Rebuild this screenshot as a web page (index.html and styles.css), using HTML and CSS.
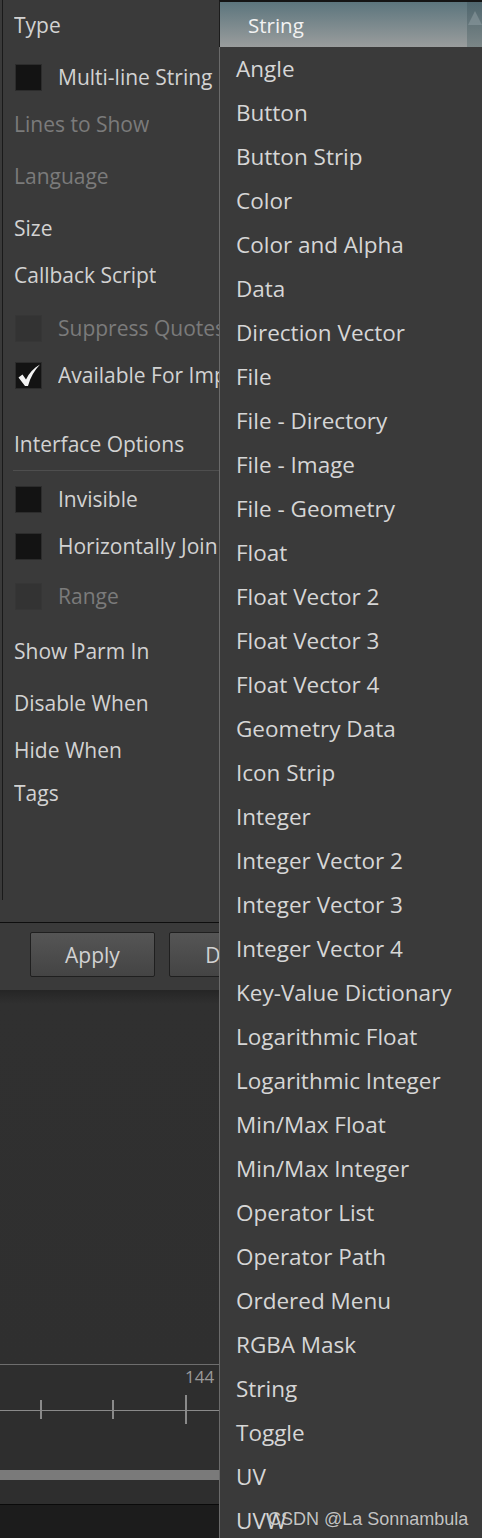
FILE: index.html
```html
<!DOCTYPE html>
<html lang="en">
<head>
    <meta charset="UTF-8">
    <meta name="viewport" content="width=device-width, initial-scale=1.0">
    <title>Edit Parameter Interface</title>
    <link rel="stylesheet" href="styles.css">
</head>
<body>

<div class="window">
    <div class="main">
        <!-- Parameter description panel -->
        <div class="parm-panel">
            <div class="row h52"><span class="label">Type</span></div>
            <div class="row h47"><span class="check"></span><span class="label">Multi-line String</span></div>
            <div class="row h52"><span class="label off">Lines to Show</span></div>
            <div class="row h52"><span class="label off">Language</span></div>
            <div class="row h47"><span class="label">Size</span></div>
            <div class="row h53"><span class="label">Callback Script</span></div>
            <div class="row h47"><span class="check off"></span><span class="label off">Suppress Quotes</span></div>
            <div class="row h69">
                <span class="check">
                    <svg width="24" height="24" viewBox="0 0 24 24"><path d="M1.5 13.5 L5.5 10.5 L9 15.5 C12 9 16.5 4 23 0.5 C17.5 6 13.5 13 11 22 L8 22 Z" fill="#f4f4f4"/></svg>
                </span>
                <span class="label">Available For Import</span>
            </div>
            <div class="row h46"><span class="label">Interface Options</span></div>
            <div class="sep"></div>
            <div class="row h47"><span class="check"></span><span class="label">Invisible</span></div>
            <div class="row h50"><span class="check"></span><span class="label">Horizontally Join to Next Parameter</span></div>
            <div class="row h55"><span class="check off"></span><span class="label off">Range</span></div>
            <div class="row h52"><span class="label">Show Parm In</span></div>
            <div class="row h47"><span class="label">Disable When</span></div>
            <div class="row h43"><span class="label">Hide When</span></div>
            <div class="row h47"><span class="label">Tags</span></div>
        </div>

        <div class="button-bar">
            <button class="btn">Apply</button>
            <button class="btn wide">Discard</button>
        </div>

        <div class="viewport"></div>

        <!-- Playbar -->
        <div class="timeline">
            <span class="frame">144</span>
            <div class="ruler"></div>
            <span class="tick" style="left: 40px"></span>
            <span class="tick" style="left: 112px"></span>
            <span class="tick major" style="left: 185px"></span>
            <div class="range-bar"></div>
        </div>

        <div class="status"></div>
    </div>

    <!-- Open Type menu -->
    <div class="type-menu">
        <div class="menu-current">
            <span>String</span>
            <span class="menu-arrow">
                <svg width="14" height="20" viewBox="0 0 14 20"><path d="M7 3 L14 17 L0 17 Z" fill="#8a9a9e" opacity="0.6"/></svg>
            </span>
        </div>
        <ul class="menu-list">
            <li>Angle</li>
            <li>Button</li>
            <li>Button Strip</li>
            <li>Color</li>
            <li>Color and Alpha</li>
            <li>Data</li>
            <li>Direction Vector</li>
            <li>File</li>
            <li>File - Directory</li>
            <li>File - Image</li>
            <li>File - Geometry</li>
            <li>Float</li>
            <li>Float Vector 2</li>
            <li>Float Vector 3</li>
            <li>Float Vector 4</li>
            <li>Geometry Data</li>
            <li>Icon Strip</li>
            <li>Integer</li>
            <li>Integer Vector 2</li>
            <li>Integer Vector 3</li>
            <li>Integer Vector 4</li>
            <li>Key-Value Dictionary</li>
            <li>Logarithmic Float</li>
            <li>Logarithmic Integer</li>
            <li>Min/Max Float</li>
            <li>Min/Max Integer</li>
            <li>Operator List</li>
            <li>Operator Path</li>
            <li>Ordered Menu</li>
            <li>RGBA Mask</li>
            <li>String</li>
            <li>Toggle</li>
            <li>UV</li>
            <li>UVW</li>
        </ul>
    </div>

    <div class="watermark">CSDN @La Sonnambula</div>
</div>

</body>
</html>
```

FILE: styles.css
```css
* {
    box-sizing: border-box;
}
body {
    margin: 0;
    background-color: #1c1c1c;
    font-family: "Open Sans", Lato, sans-serif;
    font-size: 21px;
    color: #d2d2d2;
}
.window {
    position: relative;
    width: 482px;
    height: 1538px;
    overflow: hidden;
}
.main {
    width: 219px;
    overflow: hidden;
}
/* Parameter panel */
.parm-panel {
    height: 923px;
    padding: 5px 0 0 14px;
    background-color: #3a3a3a;
    border-bottom: 1px solid #0e0e0e;
    position: relative;
    white-space: nowrap;
    overflow: hidden;
}
.parm-panel::before {
    content: "";
    position: absolute;
    left: 2px;
    top: 0;
    width: 1px;
    height: 900px;
    background-color: #1a1a1a;
}
.row {
    display: flex;
    align-items: flex-start;
    height: 47px;
}
.h43 { height: 43px; }
.h46 { height: 46px; }
.h47 { height: 47px; }
.h50 { height: 50px; }
.h52 { height: 52px; }
.h53 { height: 53px; }
.h55 { height: 55px; }
.h69 { height: 69px; }
.label {
    line-height: 40px;
    min-width: 0;
    overflow: hidden;
}
.label.off {
    color: #7b7b7b;
}
.check {
    width: 27px;
    height: 27px;
    margin: 7px 16px 0 1px;
    background-color: #131313;
    border: 1px solid #2c2c2c;
    display: flex;
    align-items: center;
    justify-content: center;
    flex-shrink: 0;
}
.check.off {
    background-color: #333333;
    border-color: #363636;
}
.sep {
    height: 1px;
    margin: 0 0 8px -1px;
    background-color: #4e4e4e;
}
/* Apply / Discard */
.button-bar {
    height: 67px;
    padding: 9px 0 0 30px;
    display: flex;
    gap: 14px;
    background-color: #3a3a3a;
    white-space: nowrap;
    overflow: hidden;
}
.btn {
    width: 125px;
    height: 45px;
    flex-shrink: 0;
    font-family: inherit;
    font-size: 21px;
    color: #d2d2d2;
    background: linear-gradient(#555555, #444444);
    border: 1px solid #1f1f1f;
    border-radius: 2px;
    padding: 0;
}
.btn.wide {
    width: 146px;
}
.viewport {
    height: 374px;
    background: linear-gradient(#252525, #303030 14px, #2f2f2f);
}
/* Playbar */
.timeline {
    position: relative;
    height: 141px;
    background-color: #2e2e2e;
    border-top: 1px solid #6e6e6e;
    border-bottom: 1px solid #0a0a0a;
}
.frame {
    position: absolute;
    left: 185px;
    top: 0;
    font-size: 17px;
    color: #9a9a9a;
}
.ruler {
    position: absolute;
    left: 0;
    top: 45px;
    width: 220px;
    height: 1px;
    background-color: #8a8a8a;
}
.tick {
    position: absolute;
    top: 35px;
    width: 2px;
    height: 19px;
    background-color: #8a8a8a;
}
.tick.major {
    top: 30px;
    height: 29px;
}
.range-bar {
    position: absolute;
    left: 0;
    top: 105px;
    width: 220px;
    height: 10px;
    background-color: #7a7a7a;
}
.status {
    height: 33px;
    background-color: #1c1c1c;
}
/* Type menu popup */
.type-menu {
    position: absolute;
    left: 219px;
    top: 0;
    width: 263px;
    height: 1538px;
    background-color: #3a3a3a;
    font-size: 22.5px;
}
.menu-current {
    height: 47px;
    display: flex;
    align-items: center;
    justify-content: space-between;
    padding-left: 28px;
    font-size: 20.5px;
    color: #f2f2f2;
    background: linear-gradient(#5c757d, #9a9d9d);
    border-top: 2px solid #141414;
    border-left: 1px solid #1c1c1c;
}
.menu-arrow {
    width: 15px;
    height: 100%;
    display: flex;
    justify-content: center;
    padding-top: 6px;
    background: linear-gradient(#4f666e, #7b8687);
}
.menu-list {
    list-style: none;
    margin: 0;
    padding: 0;
    border-left: 1px solid #6a6a6a;
    height: 1491px;
}
.menu-list li {
    height: 44px;
    line-height: 44px;
    padding-left: 16px;
    color: #d6d6d6;
    white-space: nowrap;
}
.watermark {
    position: absolute;
    left: 268px;
    top: 1509px;
    font-family: "Liberation Sans", Arial, sans-serif;
    font-size: 18px;
    color: rgba(225, 225, 225, 0.85);
    text-shadow: 0 0 1px rgba(0, 0, 0, 0.4);
}
```
